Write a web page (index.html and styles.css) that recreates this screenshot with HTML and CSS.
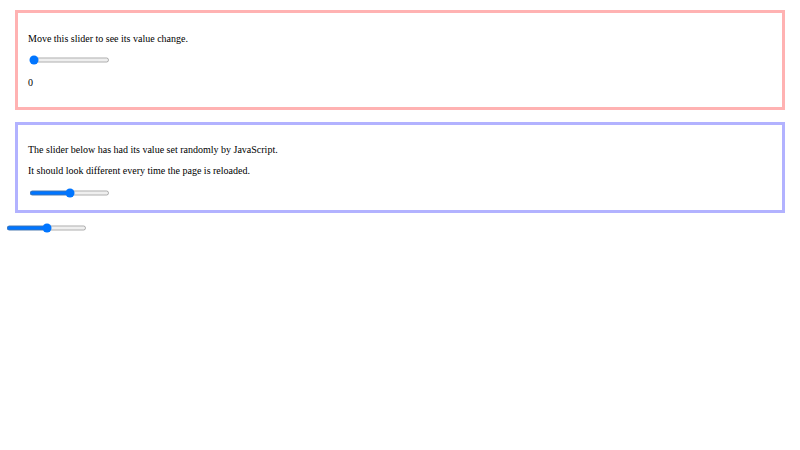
FILE: index.html
```html
<!DOCTYPE html>
<html>
<head>
<meta charset="utf-8">
<title>Range</title>
<link rel="stylesheet" href="styles.css">
</head>
<body>
<div class="box box-red">
  <p>Move this slider to see its value change.</p>
  <input class="slider" type="range" min="0" max="100" value="0">
  <p class="value">0</p>
</div>
<div class="box box-blue">
  <p>The slider below has had its value set randomly by JavaScript.</p>
  <p>It should look different every time the page is reloaded.</p>
  <input class="slider slider-random" type="range" min="0" max="100" value="50">
</div>
<input class="slider" type="range" min="0" max="100" value="50">
</body>
</html>
```
FILE: styles.css
```css
html {
  background: #fff;
}
body {
  margin: 0;
  padding: 10px 5px 0;
  font-family: "Liberation Serif", "Times New Roman", serif;
  font-size: 10px;
  line-height: 11.5px;
  color: #000;
}
.box {
  margin: 0 10px 10px;
  padding: 10px;
  border: 3px solid #ffb2b2;
}
.box-red {
  margin-bottom: 12.5px;
  padding-bottom: 8px;
}
.box-blue {
  border-color: #b2b2ff;
  padding-top: 8.5px;
}
.box p {
  margin: 10px 0;
}
.box p.value {
  margin-top: 12.5px;
}
.slider {
  display: block;
  zoom: 0.625;
}
.slider-random {
  margin-top: 19px;
}
```
